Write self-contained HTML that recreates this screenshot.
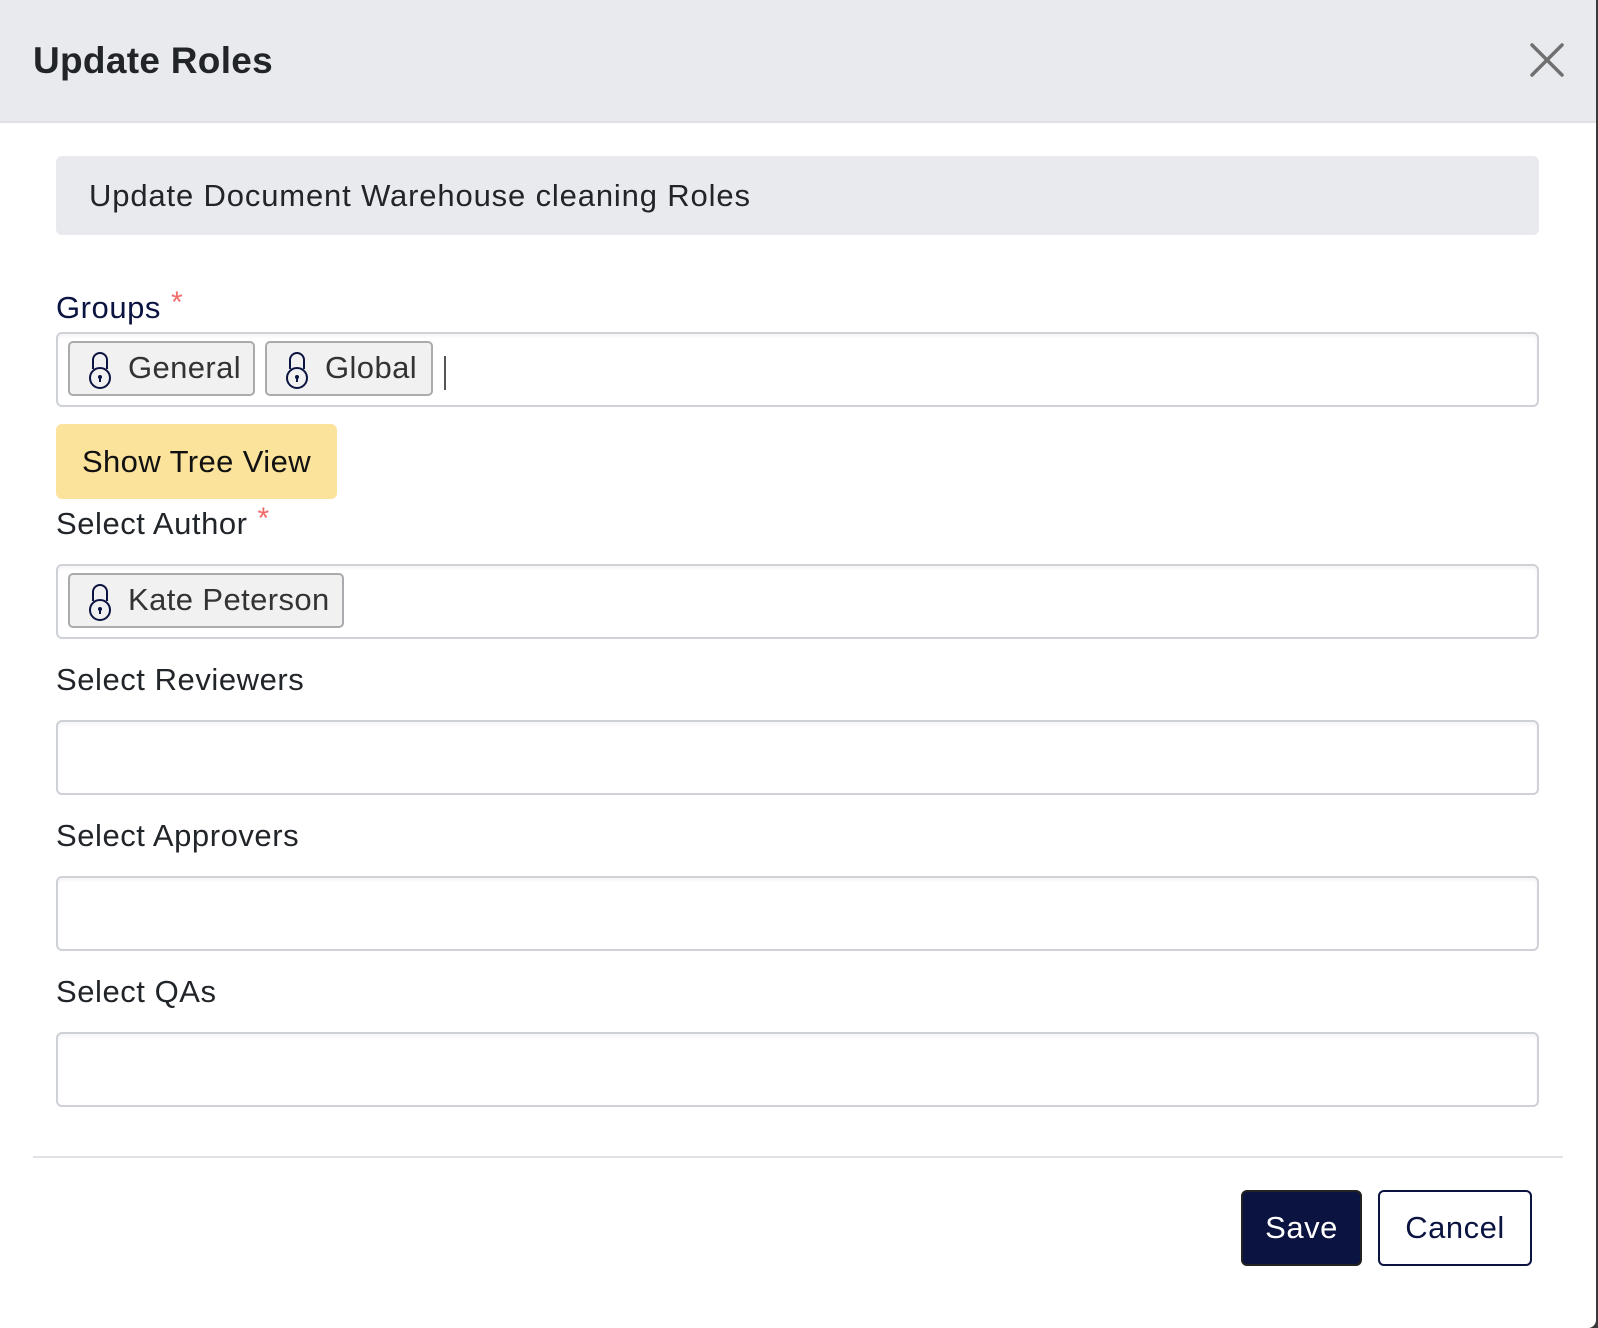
<!DOCTYPE html>
<html><head><meta charset="utf-8"><style>
*{box-sizing:border-box;margin:0;padding:0}
body{width:1598px;height:1328px;background:#3a3a3a;font-family:"Liberation Sans",sans-serif;position:relative;overflow:hidden}
.dlg{position:absolute;left:0;top:0;width:1596px;height:1328px;background:#fff;border-bottom-right-radius:8px;overflow:hidden}
.hdr{position:absolute;left:0;top:0;width:100%;height:123px;background:#e9eaee;border-bottom:2px solid #dfe1e5}
.title{position:absolute;left:33px;top:40px;font-size:37px;color:#212529;font-weight:bold;letter-spacing:0.3px}
.x{position:absolute;left:1530px;top:43px}
.info{position:absolute;left:56px;top:156px;width:1483px;height:79px;background:#e9eaee;border-radius:6px;font-size:31px;color:#212529;padding-left:33px;line-height:79px;letter-spacing:0.85px}
.lbl{position:absolute;left:56px;font-size:31px;color:#212529;letter-spacing:0.55px}
.star{color:#f26a6a;font-size:30px;position:relative;top:-6px;margin-left:10px}
.inp{position:absolute;left:56px;width:1483px;height:75px;border:2px solid #ced1d6;border-radius:6px;background:#fff;box-shadow:inset 0 3px 3px rgba(0,0,0,0.04)}
.tag{position:absolute;top:7px;height:55px;border:2px solid #a9abae;border-radius:5px;background:#f1f1f1;font-size:31px;color:#333;line-height:49px;padding-left:58px;letter-spacing:0.4px}
.tag svg{position:absolute;left:17px;top:8px}
.btnY{position:absolute;left:56px;top:424px;width:281px;height:75px;background:#fbe39c;border-radius:6px;font-size:31px;color:#111;text-align:center;line-height:75px;letter-spacing:0.4px}
.sep{position:absolute;left:33px;top:1156px;width:1530px;height:2px;background:#dfe2e6}
.save{position:absolute;left:1241px;top:1190px;width:121px;height:76px;background:#0b1340;border:2px solid #222;border-radius:6px;color:#fff;font-size:31px;text-align:center;line-height:72px;letter-spacing:0.5px}
.cancel{position:absolute;left:1378px;top:1190px;width:154px;height:76px;background:#fff;border:2px solid #0b1340;border-radius:6px;color:#0b1340;font-size:31px;text-align:center;line-height:72px;letter-spacing:0.5px}
</style></head><body>
<div class="dlg">
<div class="hdr"><div class="title">Update Roles</div>
<svg class="x" width="34" height="34" viewBox="0 0 34 34"><path d="M2 2L32 32M32 2L2 32" stroke="#707070" stroke-width="3.5" stroke-linecap="round"/></svg></div>
<div class="info">Update Document Warehouse cleaning Roles</div>

<div class="lbl" style="top:290px;color:#0b1340">Groups<span class="star">*</span></div>
<div class="inp" style="top:332px">
<div class="tag" style="left:10px;width:187px">
<svg width="26" height="38" viewBox="0 0 26 38"><path d="M6 18V9a7 7 0 0 1 14 0v9" fill="none" stroke="#0b1340" stroke-width="2"/><circle cx="13" cy="27" r="10" fill="none" stroke="#0b1340" stroke-width="2"/><circle cx="13" cy="26" r="2" fill="#0b1340"/><path d="M13 27v4" stroke="#0b1340" stroke-width="2"/></svg>General</div>
<div class="tag" style="left:207px;width:168px">
<svg width="26" height="38" viewBox="0 0 26 38"><path d="M6 18V9a7 7 0 0 1 14 0v9" fill="none" stroke="#0b1340" stroke-width="2"/><circle cx="13" cy="27" r="10" fill="none" stroke="#0b1340" stroke-width="2"/><circle cx="13" cy="26" r="2" fill="#0b1340"/><path d="M13 27v4" stroke="#0b1340" stroke-width="2"/></svg>Global</div>
<div style="position:absolute;left:386px;top:22px;width:2px;height:34px;background:#555"></div>
</div>
<div class="btnY">Show Tree View</div>
<div class="lbl" style="top:506px">Select Author<span class="star">*</span></div>
<div class="inp" style="top:564px">
<div class="tag" style="left:10px;width:276px">
<svg width="26" height="38" viewBox="0 0 26 38"><path d="M6 18V9a7 7 0 0 1 14 0v9" fill="none" stroke="#0b1340" stroke-width="2"/><circle cx="13" cy="27" r="10" fill="none" stroke="#0b1340" stroke-width="2"/><circle cx="13" cy="26" r="2" fill="#0b1340"/><path d="M13 27v4" stroke="#0b1340" stroke-width="2"/></svg>Kate Peterson</div>
</div>
<div class="lbl" style="top:662px">Select Reviewers</div>
<div class="inp" style="top:720px"></div>
<div class="lbl" style="top:818px">Select Approvers</div>
<div class="inp" style="top:876px"></div>
<div class="lbl" style="top:974px">Select QAs</div>
<div class="inp" style="top:1032px"></div>
<div class="sep"></div>
<div class="save">Save</div>
<div class="cancel">Cancel</div>
</div>
</body></html>
